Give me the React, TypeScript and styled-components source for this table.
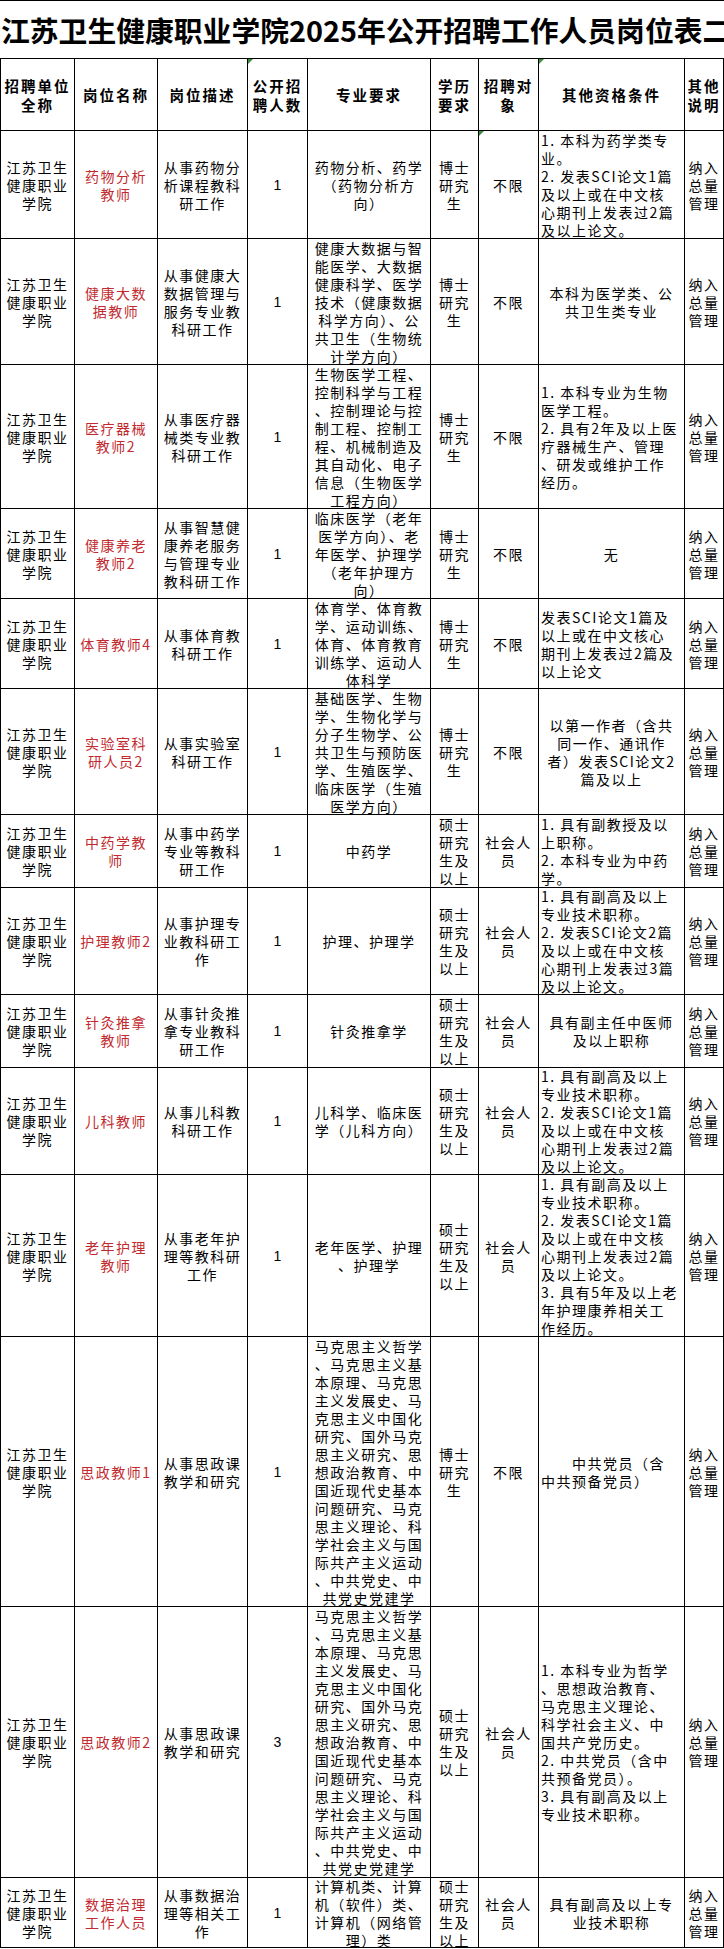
import React from 'react';
import styled, { createGlobalStyle } from 'styled-components';

const GlobalStyle = createGlobalStyle`
  html, body {
    margin: 0;
    padding: 0;
    background: #fff;
  }
  body {
    font-family: "Noto Sans CJK SC", "Noto Sans", sans-serif;
    color: #000;
  }
`;

const Page = styled.div`
  width: 724px;
`;

const Title = styled.h1`
  margin: 0;
  height: 58px;
  box-sizing: border-box;
  border-top: 1px solid #000;
  display: flex;
  align-items: center;
  padding-left: 1px;
  font-size: 28.8px;
  font-weight: 700;
  white-space: nowrap;
  overflow: hidden;
`;

const Table = styled.div`
  display: flex;
  flex-direction: column;
  border-top: 1px solid #000;
  border-left: 1px solid #000;
`;

const Row = styled.div<{ $h: number }>`
  display: grid;
  grid-template-columns: 74px 83px 90px 60px 123px 48px 60px 146px 39px;
  height: ${(p) => p.$h}px;
`;

const Cell = styled.div<{ $left?: boolean; $red?: boolean; $head?: boolean; $num?: boolean }>`
  position: relative;
  box-sizing: border-box;
  border-right: 1px solid #000;
  border-bottom: 1px solid #000;
  overflow: hidden;
  display: flex;
  flex-direction: column;
  justify-content: center;
  align-items: ${(p) => (p.$left ? 'flex-start' : 'center')};
  padding-left: ${(p) => (p.$left ? '2px' : '0')};
  text-align: ${(p) => (p.$left ? 'left' : 'center')};
  color: ${(p) => (p.$red ? '#c22a2f' : '#000')};
  font-size: ${(p) => (p.$head ? '14.5px' : '14px')};
  font-weight: ${(p) => (p.$head ? 700 : 400)};
  line-height: ${(p) => (p.$head ? '19px' : '18px')};
  letter-spacing: ${(p) => (p.$num ? '0' : p.$head ? '2px' : '1.5px')};
  font-family: ${(p) =>
    p.$num ? '"Liberation Sans", Arial, sans-serif' : '"Noto Sans CJK SC", "Noto Sans", sans-serif'};
`;

const Line = styled.span`
  display: block;
  white-space: nowrap;
`;

const Marker = styled.span`
  position: absolute;
  top: 0;
  left: 0;
  width: 0;
  height: 0;
  border-top: 5px solid #3d8b3d;
  border-right: 5px solid transparent;
`;

type Job = {
  h: number;
  name: string[];
  desc: string[];
  count: string;
  major: string[];
  edu: string[];
  target: string[];
  cond: string[];
  condLeft: boolean;
  mark?: boolean;
};

const UNIT = ['江苏卫生', '健康职业', '学院'];
const NOTE = ['纳入', '总量', '管理'];
const PHD = ['博士', '研究', '生'];
const MASTER = ['硕士', '研究', '生及', '以上'];
const ANY = ['不限'];
const SOCIAL = ['社会人', '员'];

const MARXISM = [
  '马克思主义哲学',
  '、马克思主义基',
  '本原理、马克思',
  '主义发展史、马',
  '克思主义中国化',
  '研究、国外马克',
  '思主义研究、思',
  '想政治教育、中',
  '国近现代史基本',
  '问题研究、马克',
  '思主义理论、科',
  '学社会主义与国',
  '际共产主义运动',
  '、中共党史、中',
  '共党史党建学',
];

const jobs: Job[] = [
  {
    h: 108,
    name: ['药物分析', '教师'],
    desc: ['从事药物分', '析课程教科', '研工作'],
    count: '1',
    major: ['药物分析、药学', '（药物分析方', '向）'],
    edu: PHD,
    target: ANY,
    cond: ['1. 本科为药学类专', '业。', '2. 发表SCI论文1篇', '及以上或在中文核', '心期刊上发表过2篇', '及以上论文。'],
    condLeft: true,
    mark: true,
  },
  {
    h: 126,
    name: ['健康大数', '据教师'],
    desc: ['从事健康大', '数据管理与', '服务专业教', '科研工作'],
    count: '1',
    major: ['健康大数据与智', '能医学、大数据', '健康科学、医学', '技术（健康数据', '科学方向）、公', '共卫生（生物统', '计学方向）'],
    edu: PHD,
    target: ANY,
    cond: ['本科为医学类、公', '共卫生类专业'],
    condLeft: false,
  },
  {
    h: 144,
    name: ['医疗器械', '教师2'],
    desc: ['从事医疗器', '械类专业教', '科研工作'],
    count: '1',
    major: ['生物医学工程、', '控制科学与工程', '、控制理论与控', '制工程、控制工', '程、机械制造及', '其自动化、电子', '信息（生物医学', '工程方向）'],
    edu: PHD,
    target: ANY,
    cond: ['1. 本科专业为生物', '医学工程。', '2. 具有2年及以上医', '疗器械生产、管理', '、研发或维护工作', '经历。'],
    condLeft: true,
  },
  {
    h: 90,
    name: ['健康养老', '教师2'],
    desc: ['从事智慧健', '康养老服务', '与管理专业', '教科研工作'],
    count: '1',
    major: ['临床医学（老年', '医学方向）、老', '年医学、护理学', '（老年护理方', '向）'],
    edu: PHD,
    target: ANY,
    cond: ['无'],
    condLeft: false,
  },
  {
    h: 90,
    name: ['体育教师4'],
    desc: ['从事体育教', '科研工作'],
    count: '1',
    major: ['体育学、体育教', '学、运动训练、', '体育、体育教育', '训练学、运动人', '体科学'],
    edu: PHD,
    target: ANY,
    cond: ['发表SCI论文1篇及', '以上或在中文核心', '期刊上发表过2篇及', '以上论文'],
    condLeft: true,
  },
  {
    h: 126,
    name: ['实验室科', '研人员2'],
    desc: ['从事实验室', '科研工作'],
    count: '1',
    major: ['基础医学、生物', '学、生物化学与', '分子生物学、公', '共卫生与预防医', '学、生殖医学、', '临床医学（生殖', '医学方向）'],
    edu: PHD,
    target: ANY,
    cond: ['以第一作者（含共', '同一作、通讯作', '者）发表SCI论文2', '篇及以上'],
    condLeft: false,
  },
  {
    h: 73,
    name: ['中药学教', '师'],
    desc: ['从事中药学', '专业等教科', '研工作'],
    count: '1',
    major: ['中药学'],
    edu: MASTER,
    target: SOCIAL,
    cond: ['1. 具有副教授及以', '上职称。', '2. 本科专业为中药', '学。'],
    condLeft: true,
  },
  {
    h: 107,
    name: ['护理教师2'],
    desc: ['从事护理专', '业教科研工', '作'],
    count: '1',
    major: ['护理、护理学'],
    edu: MASTER,
    target: SOCIAL,
    cond: ['1. 具有副高及以上', '专业技术职称。', '2. 发表SCI论文2篇', '及以上或在中文核', '心期刊上发表过3篇', '及以上论文。'],
    condLeft: true,
  },
  {
    h: 73,
    name: ['针灸推拿', '教师'],
    desc: ['从事针灸推', '拿专业教科', '研工作'],
    count: '1',
    major: ['针灸推拿学'],
    edu: MASTER,
    target: SOCIAL,
    cond: ['具有副主任中医师', '及以上职称'],
    condLeft: false,
  },
  {
    h: 107,
    name: ['儿科教师'],
    desc: ['从事儿科教', '科研工作'],
    count: '1',
    major: ['儿科学、临床医', '学（儿科方向）'],
    edu: MASTER,
    target: SOCIAL,
    cond: ['1. 具有副高及以上', '专业技术职称。', '2. 发表SCI论文1篇', '及以上或在中文核', '心期刊上发表过2篇', '及以上论文。'],
    condLeft: true,
  },
  {
    h: 162,
    name: ['老年护理', '教师'],
    desc: ['从事老年护', '理等教科研', '工作'],
    count: '1',
    major: ['老年医学、护理', '、护理学'],
    edu: MASTER,
    target: SOCIAL,
    cond: [
      '1. 具有副高及以上',
      '专业技术职称。',
      '2. 发表SCI论文1篇',
      '及以上或在中文核',
      '心期刊上发表过2篇',
      '及以上论文。',
      '3. 具有5年及以上老',
      '年护理康养相关工',
      '作经历。',
    ],
    condLeft: true,
  },
  {
    h: 270,
    name: ['思政教师1'],
    desc: ['从事思政课', '教学和研究'],
    count: '1',
    major: MARXISM,
    edu: PHD,
    target: ANY,
    cond: ['\u3000\u3000中共党员（含', '中共预备党员）'],
    condLeft: true,
  },
  {
    h: 271,
    name: ['思政教师2'],
    desc: ['从事思政课', '教学和研究'],
    count: '3',
    major: MARXISM,
    edu: MASTER,
    target: SOCIAL,
    cond: [
      '1. 本科专业为哲学',
      '、思想政治教育、',
      '马克思主义理论、',
      '科学社会主义、中',
      '国共产党历史。',
      '2. 中共党员（含中',
      '共预备党员）。',
      '3. 具有副高及以上',
      '专业技术职称。',
    ],
    condLeft: true,
  },
  {
    h: 70,
    name: ['数据治理', '工作人员'],
    desc: ['从事数据治', '理等相关工', '作'],
    count: '1',
    major: ['计算机类、计算', '机（软件）类、', '计算机（网络管', '理）类'],
    edu: MASTER,
    target: SOCIAL,
    cond: ['具有副高及以上专', '业技术职称'],
    condLeft: false,
  },
];

const headers: { lines: string[]; mark?: boolean }[] = [
  { lines: ['招聘单位', '全称'] },
  { lines: ['岗位名称'] },
  { lines: ['岗位描述'] },
  { lines: ['公开招', '聘人数'], mark: true },
  { lines: ['专业要求'] },
  { lines: ['学历', '要求'] },
  { lines: ['招聘对', '象'] },
  { lines: ['其他资格条件'], mark: true },
  { lines: ['其他', '说明'] },
];

const Lines: React.FC<{ items: string[] }> = ({ items }) => (
  <>
    {items.map((t, i) => (
      <Line key={i}>{t}</Line>
    ))}
  </>
);

const App: React.FC = () => {
  return (
    <Page>
      <GlobalStyle />
      <Title>江苏卫生健康职业学院2025年公开招聘工作人员岗位表二</Title>
      <Table>
        <Row $h={72}>
          {headers.map((hd, i) => (
            <Cell key={i} $head>
              {hd.mark && <Marker />}
              <Lines items={hd.lines} />
            </Cell>
          ))}
        </Row>
        {jobs.map((job, i) => (
          <Row key={i} $h={job.h}>
            <Cell>
              <Lines items={UNIT} />
            </Cell>
            <Cell $red>
              <Lines items={job.name} />
            </Cell>
            <Cell>
              <Lines items={job.desc} />
            </Cell>
            <Cell $num>{job.count}</Cell>
            <Cell>
              <Lines items={job.major} />
            </Cell>
            <Cell>
              <Lines items={job.edu} />
            </Cell>
            <Cell>
              {job.mark && <Marker />}
              <Lines items={job.target} />
            </Cell>
            <Cell $left={job.condLeft}>
              <Lines items={job.cond} />
            </Cell>
            <Cell>
              <Lines items={NOTE} />
            </Cell>
          </Row>
        ))}
      </Table>
    </Page>
  );
};

export default App;
